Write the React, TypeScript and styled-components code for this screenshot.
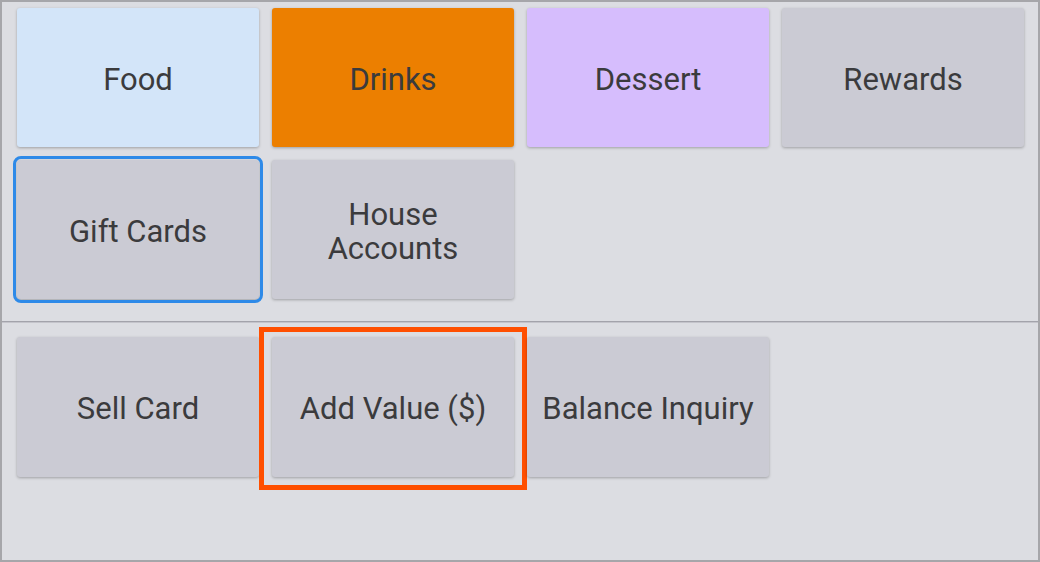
import React from "react";
import styled, { createGlobalStyle, css } from "styled-components";

const Global = createGlobalStyle`
  html, body { margin: 0; padding: 0; background: #dcdde2; }
  body { font-family: Roboto, "Noto Sans", sans-serif; }
`;

const Frame = styled.div`
  box-sizing: border-box;
  width: 1040px;
  height: 562px;
  border: 2px solid #a6a6aa;
  background: #dcdde2;
  display: flex;
  flex-direction: column;
`;

const Section = styled.div<{ $top: number; $bottom: number; $rowH: number }>`
  display: grid;
  grid-template-columns: repeat(4, 242px);
  grid-auto-rows: ${(p) => p.$rowH}px;
  column-gap: 13px;
  row-gap: 13px;
  padding: ${(p) => p.$top}px 15px ${(p) => p.$bottom}px 15px;
`;

const Divider = styled.div`
  height: 1px;
  background: #a3a3ab;
  box-shadow: 0 1px 0 #c4c4cb;
`;

type Tone = "food" | "drinks" | "dessert" | "grey";
const tones: Record<Tone, string> = {
  food: "#d3e5f9",
  drinks: "#ec7f00",
  dessert: "#d6bdfd",
  grey: "#cbcbd4",
};

const Tile = styled.button<{ $tone: Tone; $focused?: boolean }>`
  position: relative;
  border: none;
  border-radius: 3px;
  background: ${(p) => tones[p.$tone]};
  box-shadow: 0 1px 3px rgba(0, 0, 0, 0.28);
  font-family: Roboto, "Noto Sans", sans-serif;
  font-size: 31px;
  line-height: 34px;
  color: #3b3b3d;
  display: flex;
  align-items: center;
  justify-content: center;
  text-align: center;
  padding: 4px 6px 0;
  ${(p) =>
    p.$focused &&
    css`
      outline: 3px solid #2e8ae8;
      outline-offset: 1px;
      border-radius: 4px;
    `}
`;

const Mark = styled.span`
  position: absolute;
  left: -13px;
  top: -10px;
  right: -13px;
  bottom: -13px;
  border: 5px solid #ff4f00;
  pointer-events: none;
`;

export default function App() {
  return (
    <>
      <Global />
      <Frame>
        <Section $top={6} $bottom={22} $rowH={139}>
          <Tile $tone="food">Food</Tile>
          <Tile $tone="drinks">Drinks</Tile>
          <Tile $tone="dessert">Dessert</Tile>
          <Tile $tone="grey">Rewards</Tile>
          <Tile $tone="grey" $focused>Gift Cards</Tile>
          <Tile $tone="grey">House<br />Accounts</Tile>
        </Section>
        <Divider />
        <Section $top={15} $bottom={0} $rowH={140}>
          <Tile $tone="grey">Sell Card</Tile>
          <Tile $tone="grey">
            Add Value ($)
            <Mark />
          </Tile>
          <Tile $tone="grey">Balance Inquiry</Tile>
        </Section>
      </Frame>
    </>
  );
}
